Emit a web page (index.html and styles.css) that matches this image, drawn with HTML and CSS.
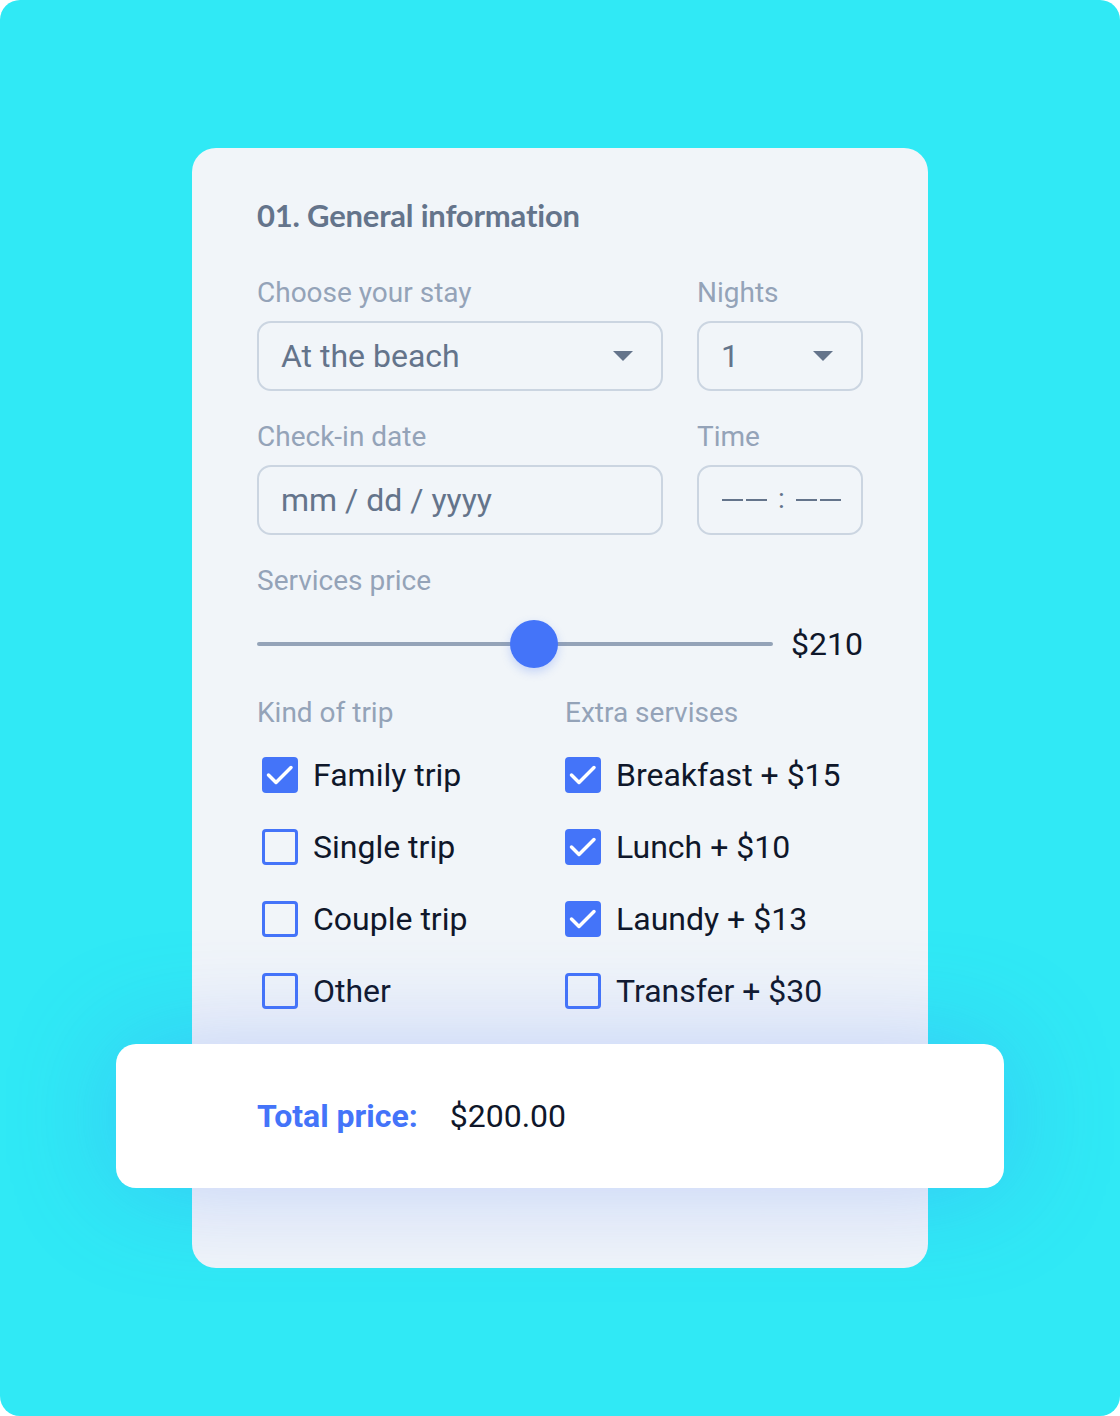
FILE: index.html
```html
<!DOCTYPE html>
<html>
<head>
<meta charset="utf-8">
<link rel="stylesheet" href="styles.css">
</head>
<body>
<div class="frame">
  <div class="card">
    <h1 class="title">01. General information</h1>

    <div class="row">
      <div class="field wide">
        <div class="label">Choose your stay</div>
        <div class="box">
          <span class="value">At the beach</span>
          <span class="caret"></span>
        </div>
      </div>
      <div class="field narrow">
        <div class="label">Nights</div>
        <div class="box">
          <span class="value">1</span>
          <span class="caret"></span>
        </div>
      </div>
    </div>

    <div class="row">
      <div class="field wide">
        <div class="label">Check-in date</div>
        <div class="box">
          <span class="value">mm / dd / yyyy</span>
        </div>
      </div>
      <div class="field narrow">
        <div class="label">Time</div>
        <div class="box">
          <span class="time"><span class="dash"></span><span class="dash"></span><span class="colon">:</span><span class="dash"></span><span class="dash"></span></span>
        </div>
      </div>
    </div>

    <div class="label">Services price</div>
    <div class="slider">
      <div class="track"><span class="thumb"></span></div>
      <span class="price">$210</span>
    </div>

    <div class="checks">
      <div class="col left">
        <div class="label">Kind of trip</div>
        <ul class="list">
          <li><span class="cb on"><svg viewBox="0 0 36 36"><polyline points="6.5,18 14,25.5 29,10.5"/></svg></span>Family trip</li>
          <li><span class="cb"></span>Single trip</li>
          <li><span class="cb"></span>Couple trip</li>
          <li><span class="cb"></span>Other</li>
        </ul>
      </div>
      <div class="col">
        <div class="label">Extra servises</div>
        <ul class="list">
          <li><span class="cb on"><svg viewBox="0 0 36 36"><polyline points="6.5,18 14,25.5 29,10.5"/></svg></span>Breakfast + $15</li>
          <li><span class="cb on"><svg viewBox="0 0 36 36"><polyline points="6.5,18 14,25.5 29,10.5"/></svg></span>Lunch + $10</li>
          <li><span class="cb on"><svg viewBox="0 0 36 36"><polyline points="6.5,18 14,25.5 29,10.5"/></svg></span>Laundy + $13</li>
          <li><span class="cb"></span>Transfer + $30</li>
        </ul>
      </div>
    </div>

    <div class="total">
      <span class="total-label">Total price:</span>
      <span class="total-value">$200.00</span>
    </div>
  </div>
</div>
</body>
</html>
```

FILE: styles.css
```css
* { box-sizing: border-box; }
html, body { margin: 0; padding: 0; background: #ffffff; }
body { font-family: Roboto, "Liberation Sans", sans-serif; }

.frame {
  width: 1120px;
  height: 1416px;
  background: #30e9f5;
  border-radius: 20px;
  padding-top: 148px;
  display: flex;
  flex-direction: column;
  align-items: center;
  overflow: hidden;
}

.card {
  width: 736px;
  background: #f1f5f9;
  border-radius: 24px;
  padding: 49px 65px 80px 65px;
  display: flex;
  flex-direction: column;
}

.title {
  margin: 0 0 45px 0;
  font-family: Lato, "Open Sans", sans-serif;
  font-weight: 700;
  font-size: 31px;
  line-height: 36px;
  color: #64748b;
  letter-spacing: -0.2px;
}

.label {
  font-size: 28px;
  line-height: 30px;
  color: #94a3b8;
}

.row {
  display: flex;
  gap: 34px;
  margin-bottom: 31px;
}

.field { display: flex; flex-direction: column; gap: 13px; }
.field.wide { width: 406px; }
.field.narrow { width: 166px; }

.box {
  height: 70px;
  border: 2px solid #cbd5e1;
  border-radius: 14px;
  display: flex;
  align-items: center;
  justify-content: space-between;
  padding: 0 28px 0 22px;
}

.value {
  font-size: 32px;
  color: #64748b;
}

.caret {
  width: 0;
  height: 0;
  border-left: 10px solid transparent;
  border-right: 10px solid transparent;
  border-top: 10px solid #64748b;
}

.time {
  display: flex;
  align-items: center;
  height: 30px;
  margin-left: 1px;
}
.dash {
  width: 21px;
  height: 2px;
  background: #64748b;
  margin-right: 3px;
}
.colon {
  font-size: 28px;
  color: #64748b;
  margin: -3px 11px 0 8px;
}

.slider {
  display: flex;
  align-items: center;
  gap: 18px;
  height: 48px;
  margin: 24px 0 30px 0;
}
.track {
  flex: 1;
  height: 4px;
  border-radius: 2px;
  background: #94a3b8;
  position: relative;
}
.thumb {
  position: absolute;
  left: 253px;
  top: -22px;
  width: 48px;
  height: 48px;
  border-radius: 50%;
  background: #4474f9;
  box-shadow: 0 4px 10px rgba(68, 116, 249, 0.25);
}
.price {
  font-size: 32px;
  color: #0f172a;
}

.checks {
  display: grid;
  grid-template-columns: 308px 1fr;
}
.list {
  list-style: none;
  margin: 29px 0 0 0;
  padding: 0;
  display: flex;
  flex-direction: column;
  gap: 36px;
}
.list li {
  display: flex;
  align-items: center;
  gap: 15px;
  height: 36px;
  font-size: 32px;
  color: #0f172a;
}
.col.left .list li { padding-left: 5px; }

.cb {
  width: 36px;
  height: 36px;
  flex: none;
  border: 3px solid #4474f9;
  border-radius: 4px;
  display: flex;
  align-items: center;
  justify-content: center;
}
.cb.on {
  background: #4474f9;
  border: none;
}
.cb svg { width: 36px; height: 36px; }
.cb polyline {
  fill: none;
  stroke: #ffffff;
  stroke-width: 3.5;
  stroke-linecap: round;
  stroke-linejoin: round;
}

.total {
  margin: 35px -141px 0 -141px;
  height: 144px;
  background: #ffffff;
  border-radius: 20px;
  display: flex;
  align-items: center;
  gap: 32px;
  padding-left: 141px;
  box-shadow: 0 0 110px rgba(68, 116, 249, 0.3);
  position: relative;
}
.total-label {
  font-size: 32px;
  font-weight: 700;
  color: #4474f9;
}
.total-value {
  font-size: 32px;
  color: #0f172a;
}
```
